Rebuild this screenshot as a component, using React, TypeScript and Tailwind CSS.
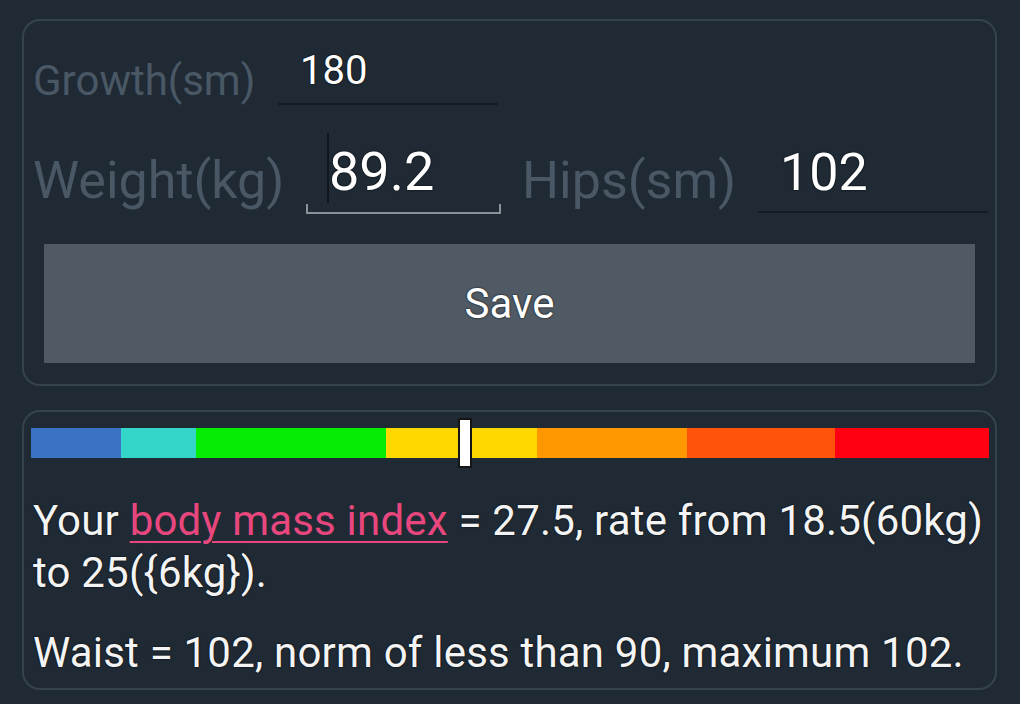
import React from 'react';

const SEGMENTS = [
  { w: 90, color: 'bg-[#3a72c4]' },
  { w: 75, color: 'bg-[#33d6c8]' },
  { w: 190, color: 'bg-[#04ec04]' },
  { w: 151, color: 'bg-[#ffd800]' },
  { w: 150, color: 'bg-[#ff9800]' },
  { w: 148, color: 'bg-[#ff520a]' },
  { w: 154, color: 'bg-[#ff0012]' },
];

export default function App() {
  return (
    <div
      className="w-[1020px] h-[704px] bg-[#1f2a35] pt-[19px] pl-[22px] overflow-hidden"
      style={{ fontFamily: 'Roboto, "Liberation Sans", sans-serif' }}
    >
      {/* Input panel */}
      <div className="w-[975px] h-[367px] border-2 border-[#36434e] rounded-[18px] flex flex-col">
        {/* Growth row */}
        <div className="flex items-start">
          <div className="mt-[39px] ml-[9px] w-[245px] text-[42px] leading-[42px] text-[#4a5865]">Growth(sm)</div>
          <div className="mt-[30px] w-[220px] pl-[22px] pb-[12px] border-b-2 border-[#141b22] text-[40px] leading-[40px] text-white [text-shadow:0_0_2px_#000]">
            180
          </div>
        </div>

        {/* Weight / Hips row */}
        <div className="flex items-start">
          <div className="mt-[50px] ml-[9px] w-[273px] text-[52px] leading-[52px] text-[#4a5865]">Weight(kg)</div>
          <div className="relative mt-[40px] w-[195px] pl-[23px] pb-[15px] text-[54px] leading-[54px] text-white [text-shadow:0_0_2px_#000]">
            89.2
            <span className="absolute left-[21px] top-[-12px] w-[2px] h-[70px] bg-[#10161c]" />
            <span className="absolute left-0 right-0 bottom-0 h-[10px] border-x-2 border-b-2 border-[#8a9298]" />
          </div>
          <div className="mt-[50px] ml-[21px] w-[236px] text-[52px] leading-[52px] text-[#4a5865]">Hips(sm)</div>
          <div className="mt-[42px] w-[230px] pl-[22px] pb-[12px] border-b-2 border-[#141b22] text-[52px] leading-[52px] text-white [text-shadow:0_0_2px_#000]">
            102
          </div>
        </div>

        <button className="mt-[30px] ml-[20px] w-[931px] h-[119px] bg-[#4f5a64] flex items-center justify-center text-[42px] leading-none text-white [text-shadow:0_0_2px_#000]">
          Save
        </button>
      </div>

      {/* Result panel */}
      <div className="mt-[24px] w-[975px] h-[280px] border-2 border-[#36434e] rounded-[18px] flex flex-col">
        <div className="relative mt-[16px] ml-[7px] w-[958px] h-[30px] flex">
          {SEGMENTS.map((s, i) => (
            <div key={i} className={s.color} style={{ width: s.w }} />
          ))}
          <div className="absolute left-[427px] top-[-10px] w-[14px] h-[50px] bg-white border-2 border-[#151515]" />
        </div>

        <div className="mt-[37px] ml-[9px] w-[958px] text-[42px] leading-[52px] tracking-[0.2px] text-[#f4f4f4] [text-shadow:0_0_2px_#000]">
          Your{' '}
          <span className="text-[#e8477e] underline decoration-2 underline-offset-[6px] [text-shadow:none]">body mass index</span>{' '}
          = 27.5, rate from 18.5(60kg) to 25({'{'}6kg{'}'}).
        </div>

        <div className="mt-[28px] ml-[9px] text-[42px] leading-[52px] tracking-[0.2px] text-[#f4f4f4] [text-shadow:0_0_2px_#000]">
          Waist = 102, norm of less than 90, maximum 102.
        </div>
      </div>
    </div>
  );
}
